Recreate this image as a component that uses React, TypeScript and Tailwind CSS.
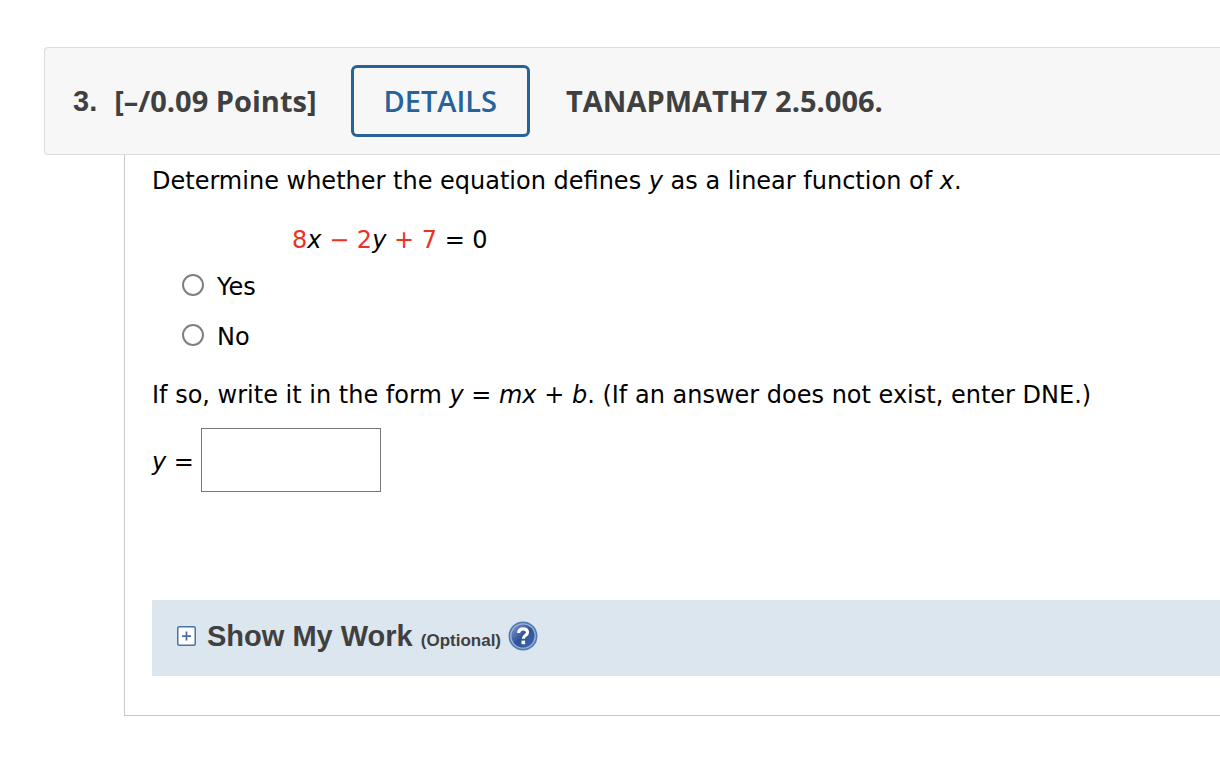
const choices = ["Yes", "No"];

const PlusBoxIcon = () => {
  return (
    <svg width="19" height="20" viewBox="0 0 19 20" aria-hidden="true">
      <rect x="0.75" y="0.75" width="17.5" height="18.5" rx="1.5" fill="#fff" stroke="#4a72a8" strokeWidth="1.5" />
      <path d="M5 10h9M9.5 5.5v9" stroke="#4a6ca3" strokeWidth="1.75" />
    </svg>
  );
};

const HelpIcon = () => {
  return (
    <svg width="30" height="30" viewBox="0 0 30 30" aria-hidden="true">
      <defs>
        <linearGradient id="help-fill" x1="0" y1="0" x2="1" y2="1">
          <stop offset="0" stopColor="#8ba5d4" />
          <stop offset="0.5" stopColor="#2f5099" />
          <stop offset="1" stopColor="#4269b2" />
        </linearGradient>
      </defs>
      <circle cx="15" cy="15" r="14.5" fill="#567bb2" />
      <circle cx="15" cy="15" r="12.2" fill="url(#help-fill)" stroke="#9db6da" strokeWidth="1.3" />
      <path
        d="M10.6 12c.2-2.900 1.900-4.200 4.500-4.200 2.600 0 4.400 1.400 4.400 3.600 0 3.200-4.200 3-4.200 6.300"
        fill="none"
        stroke="#fff"
        strokeWidth="3.2"
      />
      <rect x="13.5" y="19.6" width="3.6" height="3.6" fill="#fff" />
    </svg>
  );
};

const QuestionHeader = () => {
  return (
    <header className="ml-11 flex h-[108px] items-center rounded-l-sm border border-r-0 border-[#dcdcdc] bg-[#f7f7f7] pl-7 font-['Open_Sans',sans-serif] text-[29px] font-bold whitespace-nowrap text-[#404040]">
      <span className="font-['Liberation_Sans',sans-serif]">3.</span>
      <span className="ml-[17px]">[–/0.09 Points]</span>
      <button className="ml-[34px] h-[72px] rounded-md border-3 border-[#27629a] px-[30px] font-semibold text-[#27629a]">
        DETAILS
      </button>
      <h2 className="ml-9">TANAPMATH7 2.5.006.</h2>
    </header>
  );
};

const App = () => {
  return (
    <main className="overflow-x-hidden bg-white pt-[47px] font-['DejaVu_Sans',sans-serif] text-2xl text-black">
      <QuestionHeader />
      <section className="ml-[124px] border-b border-l border-[#c8c8c8] pt-[10px] pb-[39px] pl-[27px]">
        <p>
          Determine whether the equation defines <i>y</i> as a linear function
          of <i>x</i>.
        </p>
        <p className="mt-[27px] ml-[140px]">
          <span className="text-[#ef3124]">8</span>
          <i>x</i> <span className="text-[#ef3124]">− 2</span>
          <i>y</i> <span className="text-[#ef3124]">+ 7</span> = 0
        </p>
        <fieldset className="mt-[15px] ml-[30px] flex flex-col gap-[18px]">
          {choices.map((choice) => (
            <label key={choice} className="flex items-start gap-[13px]">
              <input
                type="radio"
                name="linear"
                value={choice}
                className="mt-[3px] size-[22px] appearance-none rounded-full border-2 border-[#808080] bg-white checked:border-6"
              />
              {choice}
            </label>
          ))}
        </fieldset>
        <p className="mt-[26px]">
          If so, write it in the form <i>y</i> = <i>mx</i> + <i>b</i>. (If an
          answer does not exist, enter DNE.)
        </p>
        <div className="mt-[17px] flex items-center gap-[7px]">
          <label htmlFor="answer" className="pt-1">
            <i>y</i> =
          </label>
          <input
            id="answer"
            type="text"
            className="h-16 w-[180px] border border-[#767676] bg-white px-3"
          />
        </div>
        <div className="mt-[108px] flex h-[76px] items-center bg-[#dce6ee] pb-1 pl-[25px] font-['Liberation_Sans',sans-serif] font-bold text-[#404040]">
          <button className="flex items-center gap-[11px]">
            <PlusBoxIcon />
            <span className="text-[29px]">
              Show My Work <span className="text-[17px]">(Optional)</span>
            </span>
          </button>
          <button aria-label="Help" className="ml-[7px]">
            <HelpIcon />
          </button>
        </div>
      </section>
    </main>
  );
};

export default App;
